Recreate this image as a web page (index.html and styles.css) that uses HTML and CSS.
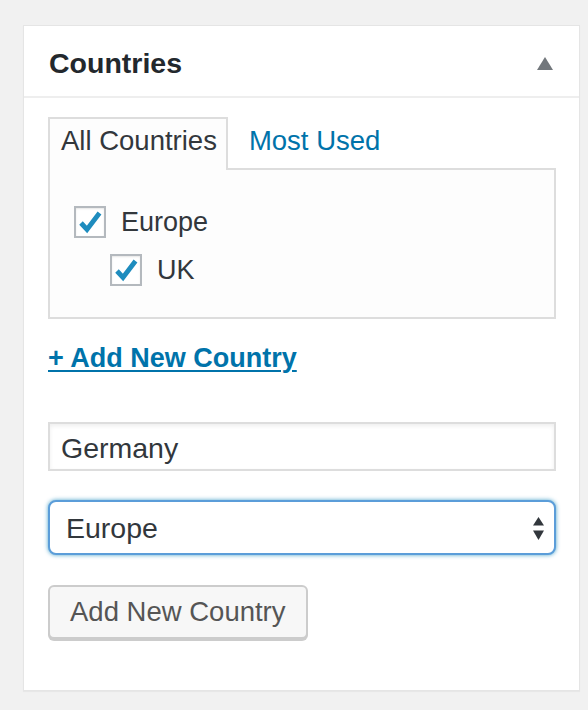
FILE: index.html
```html
<!DOCTYPE html>
<html lang="en">
<head>
<meta charset="utf-8">
<title>Countries</title>
<link rel="stylesheet" href="styles.css">
</head>
<body>
<div class="page">
  <div class="postbox">
    <div class="postbox-header">
      <h2 class="postbox-title">Countries</h2>
      <svg class="toggle" width="16" height="13" viewBox="0 0 16 13" aria-hidden="true"><polygon points="8,0 16,13 0,13" fill="#72777c"/></svg>
    </div>
    <div class="inside">
      <ul class="tabs">
        <li class="tab tab-active">All Countries</li>
        <li class="tab"><a class="tab-link" href="#">Most Used</a></li>
      </ul>
      <div class="tab-panel">
        <ul class="checklist">
          <li class="check-row">
            <span class="checkbox"><svg width="28" height="28" viewBox="0 0 28 28"><polyline points="5,15 11,21.5 23.5,5" fill="none" stroke="#1e8cbe" stroke-width="4.8"/></svg></span>
            <span class="check-label">Europe</span>
          </li>
          <li class="check-row child">
            <span class="checkbox"><svg width="28" height="28" viewBox="0 0 28 28"><polyline points="5,15 11,21.5 23.5,5" fill="none" stroke="#1e8cbe" stroke-width="4.8"/></svg></span>
            <span class="check-label">UK</span>
          </li>
        </ul>
      </div>
      <p class="add-line"><a class="add-link" href="#">+ Add New Country</a></p>
      <input class="text-input" type="text" value="Germany">
      <div class="select-wrap">
        <select class="select">
          <option>Europe</option>
        </select>
        <svg class="select-arrows" width="11" height="23" viewBox="0 0 11 23" aria-hidden="true"><polygon points="5.5,0 11,8.5 0,8.5" fill="#32373c"/><polygon points="0,13.5 11,13.5 5.5,23" fill="#32373c"/></svg>
      </div>
      <button class="button" type="button">Add New Country</button>
    </div>
  </div>
</div>
</body>
</html>
```

FILE: styles.css
```css
html, body {
  margin: 0;
  padding: 0;
  background: #f1f1f1;
}
body {
  font-family: "Liberation Sans", Arial, sans-serif;
  color: #32373c;
}
.page {
  padding: 25px 8px 20px 23px;
}
.postbox {
  background: #fff;
  border: 1px solid #e5e5e5;
  box-shadow: 0 1px 1px rgba(0, 0, 0, 0.04);
}
.postbox-header {
  display: flex;
  align-items: center;
  justify-content: space-between;
  height: 66px;
  padding: 4px 26px 0 25px;
  border-bottom: 2px solid #eee;
}
.postbox-title {
  margin: 0;
  font-size: 28.5px;
  line-height: 66px;
  font-weight: bold;
  color: #23282d;
}
.toggle {
  display: block;
  margin-top: 1px;
}
.inside {
  padding: 19px 23px 51px 24px;
}
.tabs {
  list-style: none;
  margin: 0 0 -2px;
  padding: 0;
  display: flex;
  align-items: flex-start;
  position: relative;
  z-index: 1;
}
.tab {
  font-size: 27.5px;
  line-height: 43px;
  padding: 0 9px 8px 11px;
  border: 2px solid transparent;
  border-bottom: 0;
}
.tab-active {
  background: #fdfdfd;
  border-color: #ddd;
  color: #32373c;
}
.tab + .tab {
  margin-left: 8px;
}
.tab-link {
  color: #0073aa;
  text-decoration: none;
}
.tab-panel {
  background: #fdfdfd;
  border: 2px solid #ddd;
}
.checklist {
  list-style: none;
  margin: 0;
  padding: 36px 0 31px 24px;
  display: flex;
  flex-direction: column;
  gap: 16px;
}
.check-row {
  display: flex;
  align-items: center;
  height: 32px;
}
.check-row.child {
  padding-left: 36px;
}
.checkbox {
  box-sizing: border-box;
  width: 32px;
  height: 32px;
  border: 2px solid #b4b9be;
  background: #fff;
  box-shadow: inset 0 1px 2px rgba(0, 0, 0, 0.1);
  display: flex;
  align-items: center;
  justify-content: center;
  flex: none;
}
.checkbox svg {
  display: block;
}
.check-label {
  margin-left: 15px;
  font-size: 27px;
  color: #32373c;
}
.add-line {
  margin: 24px 0 0;
  font-size: 27px;
  line-height: 30px;
}
.add-link {
  color: #0073aa;
  font-weight: bold;
  text-decoration: underline;
  text-decoration-thickness: 2px;
  text-underline-offset: 3px;
}
.text-input {
  display: block;
  box-sizing: border-box;
  width: 100%;
  height: 49px;
  margin: 49px 0 0;
  padding: 4px 11px 0;
  border: 2px solid #ddd;
  border-radius: 0;
  box-shadow: inset 0 2px 4px rgba(0, 0, 0, 0.07);
  background: #fff;
  font-family: "Liberation Sans", Arial, sans-serif;
  font-size: 28.5px;
  color: #32373c;
  outline: none;
}
.select-wrap {
  position: relative;
  margin-top: 29px;
}
.select {
  display: block;
  box-sizing: border-box;
  width: 100%;
  height: 55px;
  padding: 0 40px 0 16px;
  border: 2px solid #5b9dd9;
  border-radius: 8px;
  box-shadow: 0 0 4px rgba(30, 140, 190, 0.8);
  background: #fff;
  font-family: "Liberation Sans", Arial, sans-serif;
  font-size: 28.5px;
  color: #32373c;
  -webkit-appearance: none;
  appearance: none;
  outline: none;
}
.select-arrows {
  position: absolute;
  right: 12px;
  top: 17px;
  pointer-events: none;
}
.button {
  display: block;
  box-sizing: border-box;
  height: 54px;
  margin-top: 30px;
  padding: 0 20px;
  border: 2px solid #ccc;
  border-radius: 6px;
  background: #f7f7f7;
  box-shadow: 0 2px 0 #ccc;
  font-family: "Liberation Sans", Arial, sans-serif;
  font-size: 27.5px;
  color: #555;
  cursor: pointer;
}
```
